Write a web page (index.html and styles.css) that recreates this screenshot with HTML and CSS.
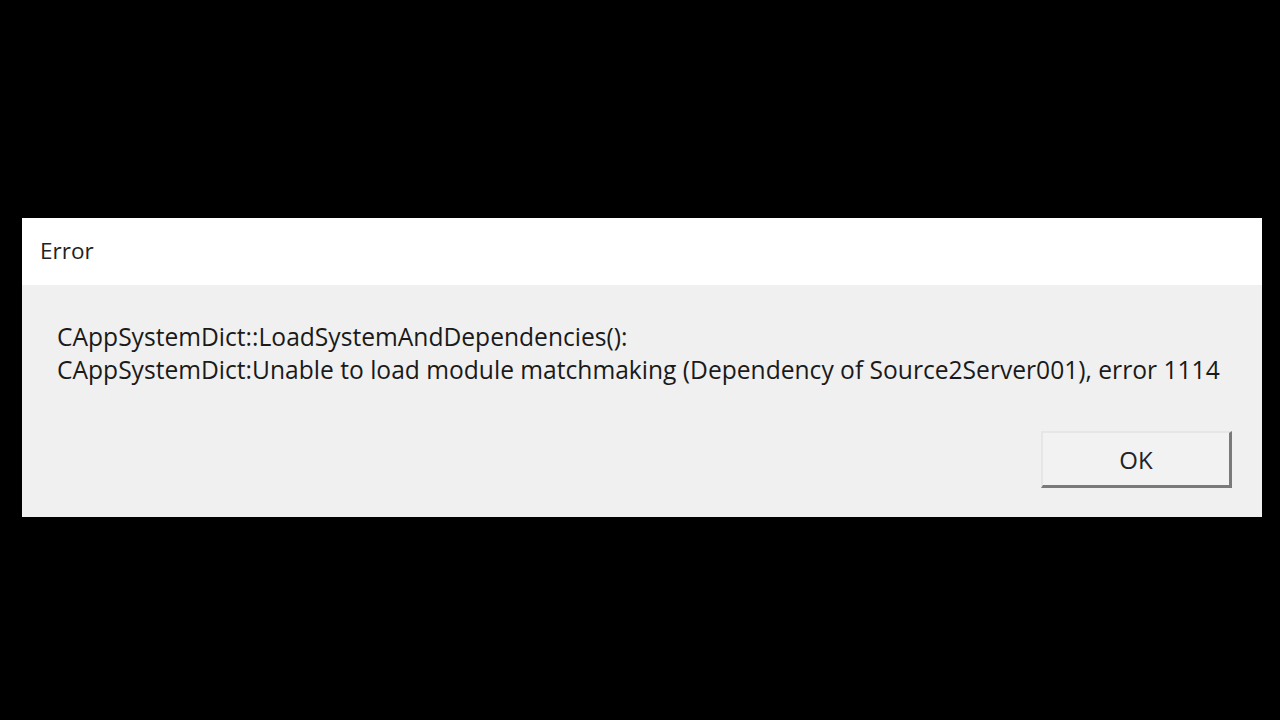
FILE: index.html
```html
<!DOCTYPE html>
<html>
<head>
<meta charset="utf-8">
<link rel="stylesheet" href="styles.css">
</head>
<body>
<div class="screen">
  <div class="dialog">
    <div class="titlebar">Error</div>
    <div class="body">
      <div class="message">
        <div>CAppSystemDict::LoadSystemAndDependencies():</div>
        <div>CAppSystemDict:Unable to load module matchmaking (Dependency of Source2Server001), error 1114</div>
      </div>
      <div class="actions">
        <div class="btn">OK</div>
      </div>
    </div>
  </div>
</div>
</body>
</html>
```
FILE: styles.css
```css
html, body {
  margin: 0;
  padding: 0;
  background: #000;
}
.screen {
  width: 1280px;
  height: 720px;
  padding-top: 218px;
  padding-left: 22px;
  box-sizing: border-box;
}
.dialog {
  width: 1240px;
  height: 299px;
  background: #f0f0f0;
  display: flex;
  flex-direction: column;
  font-family: "Open Sans", "Noto Sans", sans-serif;
  color: #1a1a1a;
}
.titlebar {
  height: 67px;
  background: #fff;
  display: flex;
  align-items: center;
  padding: 0 0 3px 18px;
  box-sizing: border-box;
  font-size: 22.5px;
  color: #222;
}
.body {
  flex: 1;
  display: flex;
  flex-direction: column;
  padding: 35px 31px 0 35px;
}
.message {
  font-size: 24.6px;
  line-height: 33px;
  white-space: nowrap;
}
.actions {
  display: flex;
  justify-content: flex-end;
  margin-top: 45px;
}
.btn {
  width: 186px;
  height: 52px;
  box-sizing: content-box;
  margin-right: -1px;
  border-top: 2px solid #e6e6e6;
  border-left: 2px solid #e6e6e6;
  border-right: 3px solid #7a7a7a;
  border-bottom: 3px solid #7a7a7a;
  background: #f2f2f2;
  display: flex;
  align-items: center;
  justify-content: center;
  font-size: 24px;
  color: #222;
}
```
